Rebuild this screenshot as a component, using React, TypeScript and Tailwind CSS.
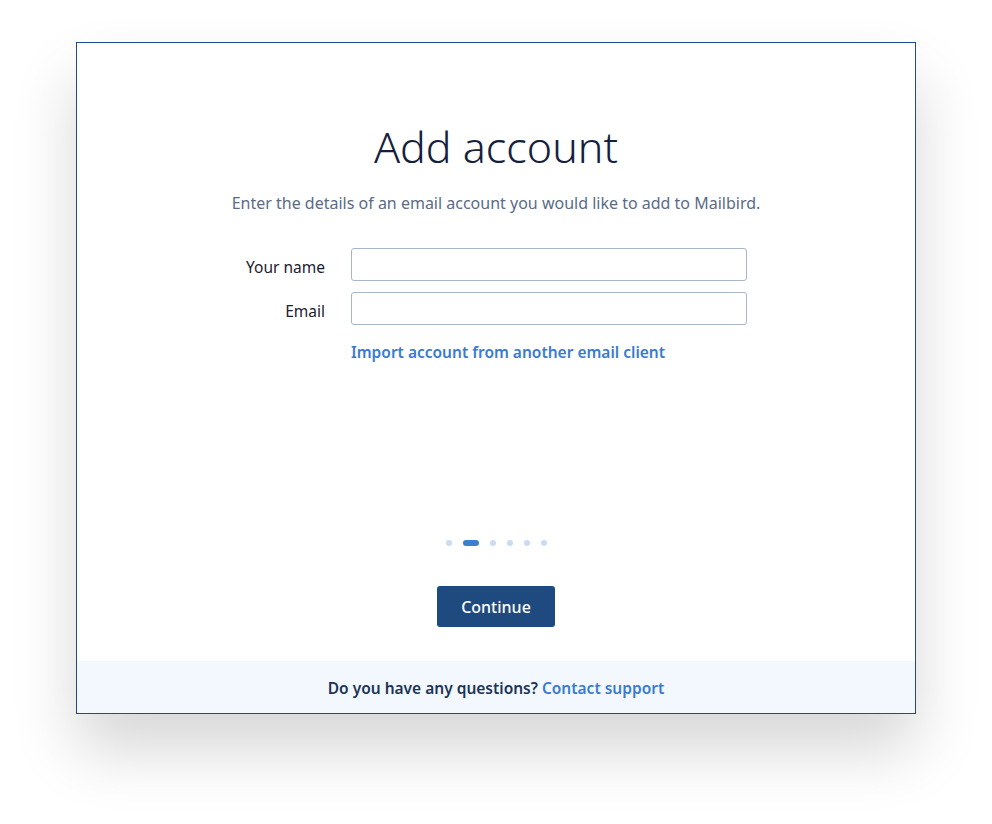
export default function App() {
  const dots = [false, true, false, false, false, false];

  return (
    <div className="min-h-screen bg-white pt-[42px] font-['Noto_Sans',sans-serif]">
      <div className="mx-auto flex h-[672px] w-[840px] flex-col border border-[#1f4b8c] bg-white shadow-[0_36px_60px_rgba(0,0,0,0.16)]">
        <h1 className="mt-[75px] text-center text-[43px] font-light leading-[58px] text-[#14213d]">Add account</h1>
        <p className="mt-[15px] text-center text-[16px] leading-[24px] text-[#5b6b86]">
          Enter the details of an email account you would like to add to Mailbird.
        </p>

        <div className="mt-[33px] grid grid-cols-[248px_396px] gap-x-[26px] gap-y-[11px]">
          <label className="self-center pt-[6px] text-right text-[15.5px] text-[#1b2030]">Your name</label>
          <input className="h-[33px] rounded-[3px] border border-[#a9b6c8] px-2 outline-none" />
          <label className="self-center pt-[6px] text-right text-[15.5px] text-[#1b2030]">Email</label>
          <input className="h-[33px] rounded-[3px] border border-[#a9b6c8] px-2 outline-none" />
          <div />
          <a className="mt-[4px] text-[15.5px] font-semibold leading-[24px] text-[#3a7bd0]">
            Import account from another email client
          </a>
        </div>

        <div className="mt-[176px] flex items-center justify-center gap-[11px]">
          {dots.map((active, i) =>
            active ? (
              <span key={i} className="h-[6px] w-[16px] rounded-full bg-[#3c7fd2]" />
            ) : (
              <span key={i} className="h-[6px] w-[6px] rounded-full bg-[#cadcf2]" />
            )
          )}
        </div>

        <div className="mt-[40px] flex justify-center">
          <button className="h-[41px] w-[118px] rounded-[3px] bg-[#1f4a7f] text-[16px] font-medium text-white">
            Continue
          </button>
        </div>

        <div className="mt-auto flex h-[52px] items-center justify-center bg-[#f3f8fe] pt-[3px] text-[15.5px] font-semibold">
          <span className="text-[#1c3457]">Do you have any questions?</span>
          <a className="ml-[4px] text-[#3a7bd0]">Contact support</a>
        </div>
      </div>
    </div>
  );
}
